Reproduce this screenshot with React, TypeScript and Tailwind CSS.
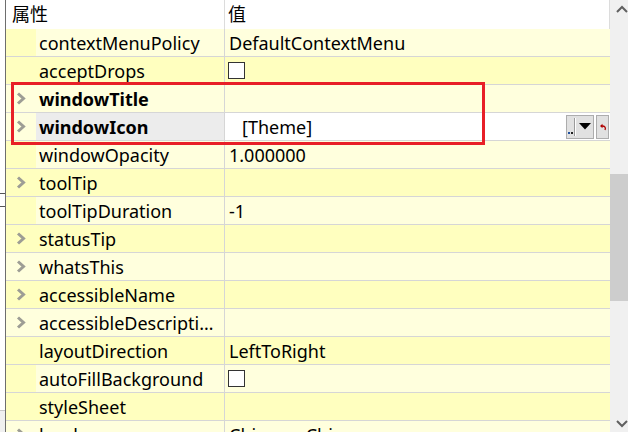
import React from "react";

type Row = {
  name: string;
  value?: string;
  exp?: boolean;
  bold?: boolean;
  checkbox?: boolean;
  editor?: boolean;
};

const rows: Row[] = [
  { name: "contextMenuPolicy", value: "DefaultContextMenu" },
  { name: "acceptDrops", checkbox: true },
  { name: "windowTitle", exp: true, bold: true },
  { name: "windowIcon", exp: true, bold: true, editor: true },
  { name: "windowOpacity", value: "1.000000" },
  { name: "toolTip", exp: true },
  { name: "toolTipDuration", value: "-1" },
  { name: "statusTip", exp: true },
  { name: "whatsThis", exp: true },
  { name: "accessibleName", exp: true },
  { name: "accessibleDescripti\u2026", exp: true },
  { name: "layoutDirection", value: "LeftToRight" },
  { name: "autoFillBackground", checkbox: true },
  { name: "styleSheet" },
  { name: "locale", exp: true, value: "Chinese, China" },
];

const LIGHT = "bg-[#ffffdd]";
const DARK = "bg-[#ffffbf]";

function Chevron() {
  return (
    <svg width="10" height="13" viewBox="0 0 10 13" className="ml-[10px]">
      <polyline points="2,1.5 7.5,6.5 2,11.5" fill="none" stroke="#9d9d95" strokeWidth="3" />
    </svg>
  );
}

function PropRow({ r, i }: { r: Row; i: number }) {
  const light = i % 2 === 0;
  const rowBg = light ? LIGHT : DARK;
  const branchBg = r.editor ? LIGHT : light && !r.exp ? DARK : rowBg;
  const nameBg = r.editor ? "bg-[#ececec]" : rowBg;
  const valueBg = r.editor ? "bg-white" : rowBg;
  return (
    <div className="flex h-[28px] shrink-0 border-b border-[#d6d6d6]">
      <div className={`w-[30px] shrink-0 flex items-center ${branchBg}`}>{r.exp && <Chevron />}</div>
      <div
        className={`w-[189px] shrink-0 flex items-center pl-[3px] pt-[2px] border-r border-[#d6d6d6] whitespace-nowrap overflow-hidden ${nameBg} ${
          r.bold ? "font-bold" : ""
        }`}
      >
        {r.name}
      </div>
      <div className={`flex-1 flex items-center whitespace-nowrap overflow-hidden ${valueBg} ${r.editor ? "pl-[17px]" : "pl-[4px]"}`}>
        {r.value && <span className="pt-[2px]">{r.value}</span>}
        {r.checkbox && <div className="w-[17px] h-[17px] -ml-px bg-white border border-[#333333]" />}
        {r.editor && (
          <>
            <span className="pt-[2px]">[Theme]</span>
            <div className="ml-auto flex items-center gap-[2px] pr-[1px]">
              <div className="relative w-[28px] h-[24px] bg-[#e1e1e1] border border-[#adadad] flex items-center">
                <div className="absolute left-[1px] bottom-[4px] flex gap-[1px]">
                  <div className="w-[2px] h-[2px] bg-[#2050a0]" />
                  <div className="w-[2px] h-[2px] bg-[#202020]" />
                </div>
                <div className="absolute left-[7px] top-[2px] bottom-[2px] w-[2px] border-l border-[#9a9a9a] bg-white" />
                <svg width="12" height="7" viewBox="0 0 12 7" className="ml-[12px]">
                  <polygon points="0,0 12,0 6,6.5" fill="#000" />
                </svg>
              </div>
              <div className="w-[13px] h-[24px] bg-[#e1e1e1] border border-[#adadad] flex items-center justify-center">
                <svg width="8" height="8" viewBox="0 0 8 8">
                  <path d="M1 3 L3.5 0.8 L3.5 5.2 Z" fill="#b00000" />
                  <path d="M3 3 C6 3 7 4.5 6 7" fill="none" stroke="#b00000" strokeWidth="1.3" />
                </svg>
              </div>
            </div>
          </>
        )}
      </div>
    </div>
  );
}

export default function App() {
  return (
    <div
      className="relative w-[628px] h-[432px] overflow-hidden bg-white flex text-[18px] text-black"
      style={{ fontFamily: '"Noto Sans", "Noto Sans CJK SC", sans-serif' }}
    >
      {/* left strip */}
      <div className="w-[5px] shrink-0 flex flex-col">
        <div className="h-[193px] bg-white" />
        <div className="h-[14px] bg-white border-y border-[#555555]" />
        <div className="h-[203px] bg-white" />
        <div className="flex-1 bg-[#f0f0f0] border-t border-[#c8c8c8]" />
      </div>
      <div className="w-px shrink-0 bg-[#6e6e6e]" />
      {/* property tree */}
      <div className="w-[604px] shrink-0 flex flex-col">
        <div className="flex h-[29px] shrink-0 bg-white">
          <div className="w-[219px] shrink-0 flex items-center pl-[6px] border-r border-[#dcdcdc]">属性</div>
          <div className="flex-1 flex items-center pl-[3px] border-r border-[#dcdcdc]">值</div>
        </div>
        {rows.map((r, i) => (
          <PropRow key={r.name} r={r} i={i} />
        ))}
      </div>
      {/* scrollbar */}
      <div className="w-[18px] shrink-0 bg-[#f0f0f0] flex flex-col">
        <div className="h-[17px] flex items-center justify-end">
          <svg width="12" height="8" viewBox="0 0 12 8">
            <polyline points="1,7 6,2 11,7" fill="none" stroke="#606060" strokeWidth="2" />
          </svg>
        </div>
        <div className="h-[157px]" />
        <div className="h-[127px] bg-[#cdcdcd]" />
        <div className="flex-1" />
        <div className="h-[17px] flex items-center justify-end">
          <svg width="12" height="8" viewBox="0 0 12 8">
            <polyline points="1,1 6,6 11,1" fill="none" stroke="#606060" strokeWidth="2" />
          </svg>
        </div>
      </div>
      {/* highlight box */}
      <div className="absolute left-[11px] top-[82px] w-[474px] h-[63px] border-[3px] border-[#e81f27]" />
    </div>
  );
}
